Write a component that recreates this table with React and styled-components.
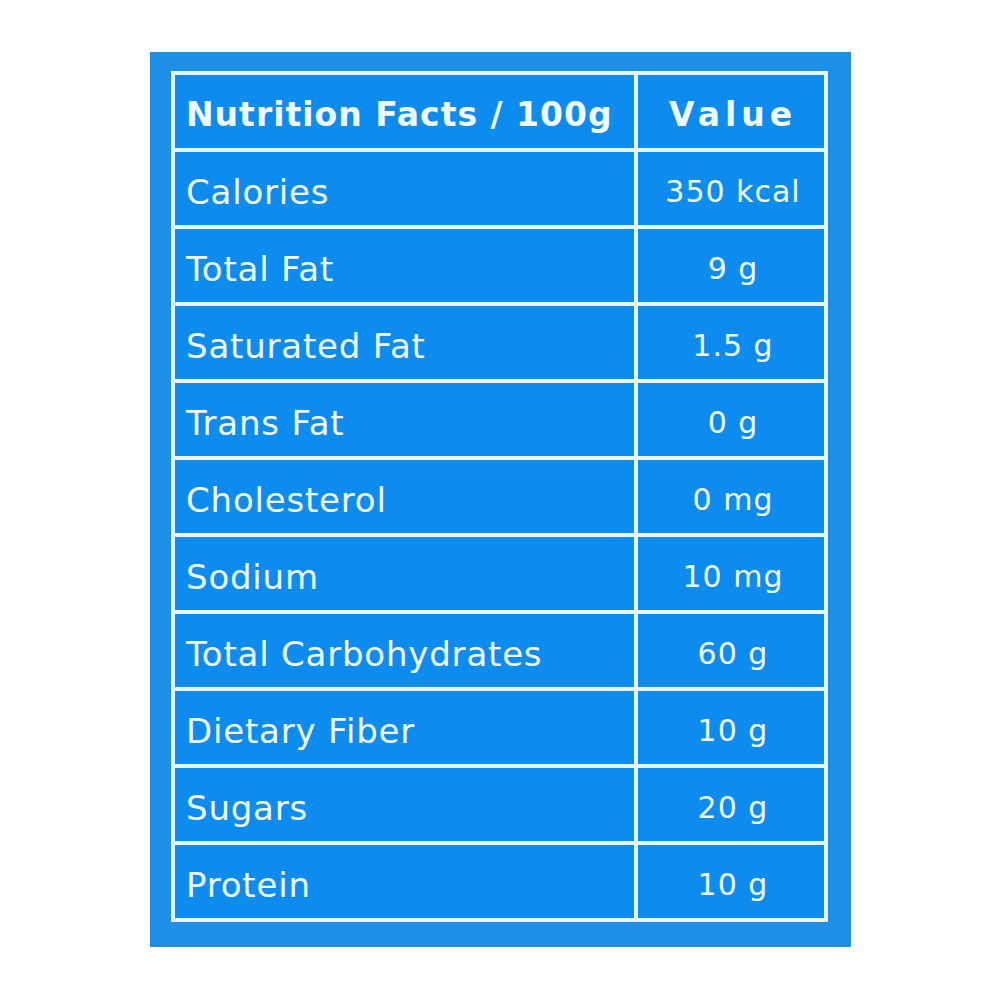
import React from 'react';
import styled, { createGlobalStyle } from 'styled-components';

const GlobalStyle = createGlobalStyle`
    html, body {
        margin: 0;
        padding: 0;
        background: #ffffff;
    }
    body {
        font-family: 'DejaVu Sans', 'Liberation Sans', sans-serif;
    }
`;

//#region styled-components

const Page = styled.div`
    width: 1000px;
    height: 1000px;
    padding: 52px 0 0 150px;
    box-sizing: border-box;
`;

const Panel = styled.div`
    width: 701px;
    height: 895px;
    box-sizing: border-box;
    padding: 19px 23px 25px 21px;
    background-color: #1d8fe6;
`;

const Table = styled.div`
    display: grid;
    grid-template-columns: 459px 186px;
    grid-template-rows: repeat(11, 73px);
    gap: 4px;
    padding: 4px;
    width: 657px;
    height: 851px;
    box-sizing: border-box;
    background-color: #e9f5fc;
`;

const Cell = styled.div`
    display: flex;
    align-items: center;
    justify-content: ${(props) => (props.center ? 'center' : 'flex-start')};
    padding: ${(props) => (props.center ? '6px 0 0 4px' : '6px 0 0 11px')};
    background-color: #0d8cf0;
    color: #f2f9fd;
    white-space: nowrap;
`;

const HeadText = styled.span`
    font-size: 33px;
    font-weight: 700;
    letter-spacing: ${(props) => props.spacing || '1px'};
`;

const LabelText = styled.span`
    font-size: 34px;
    letter-spacing: 0.8px;
`;

const ValueText = styled.span`
    font-size: 30px;
    letter-spacing: 1px;
`;

//#endregion

const rows = [
    ['Calories', '350 kcal'],
    ['Total Fat', '9 g'],
    ['Saturated Fat', '1.5 g'],
    ['Trans Fat', '0 g'],
    ['Cholesterol', '0 mg'],
    ['Sodium', '10 mg'],
    ['Total Carbohydrates', '60 g'],
    ['Dietary Fiber', '10 g'],
    ['Sugars', '20 g'],
    ['Protein', '10 g'],
];

const App = () => {
    return (
        <>
            <GlobalStyle />
            <Page>
                <Panel>
                    <Table>
                        <Cell>
                            <HeadText>Nutrition Facts / 100g</HeadText>
                        </Cell>
                        <Cell center>
                            <HeadText spacing="5px">Value</HeadText>
                        </Cell>
                        {rows.map(([label, value]) => (
                            <React.Fragment key={label}>
                                <Cell>
                                    <LabelText>{label}</LabelText>
                                </Cell>
                                <Cell center>
                                    <ValueText>{value}</ValueText>
                                </Cell>
                            </React.Fragment>
                        ))}
                    </Table>
                </Panel>
            </Page>
        </>
    );
};

export default App;
